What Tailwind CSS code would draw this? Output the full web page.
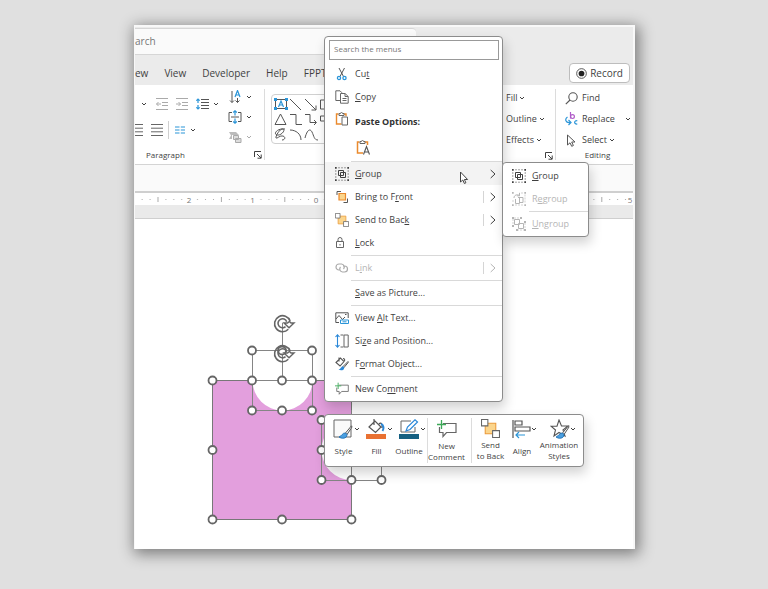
<!DOCTYPE html>
<html lang="en">
<head>
<meta charset="utf-8">
<title>Presentation editor</title>
<script src="https://cdn.jsdelivr.net/npm/@tailwindcss/browser@4"></script>
</head>
<body class="bg-[#e0e0e0] font-['Open_Sans','Noto_Sans',sans-serif] text-[#3f3f3f]">
<svg width="0" height="0" class="absolute" aria-hidden="true">
  <symbol id="caret" viewBox="0 0 6 6"><path d="M1 2 3 4 5 2" fill="none" stroke="currentColor" stroke-width="1"/></symbol>
  <symbol id="chev" viewBox="0 0 6 10"><path d="M.7 1 5 5 .7 9" fill="none" stroke="currentColor" stroke-width="1"/></symbol>
  <symbol id="launch" viewBox="0 0 8 8"><path d="M.5 6V.5H7M3 3l4 4M7.200 3.500v3.700H3.500" fill="none" stroke="currentColor"/></symbol>
  <symbol id="group" viewBox="0 0 14 14"><path d="M3.500 3.500h5v5h-5zM5.500 5.500h5v5h-5z" fill="none" stroke="currentColor"/><path d="M3 .8h8M3 13.200h8M.8 3v8M13.200 3v8" stroke="currentColor" stroke-width=".5" stroke-dasharray="2 1"/><path d="M0 0h1.700v1.700H0zM12.300 0H14v1.700h-1.700zM0 12.300h1.700V14H0zM12.300 12.300H14V14h-1.700z" fill="currentColor"/></symbol>
  <symbol id="regroup" viewBox="0 0 14 14"><path d="M3.500 7v4.500h4V6M6 5.500h5v5H8M2 6C2 3 5 2 7.500 3.500M7.500.8v3H4.800" fill="none" stroke="currentColor"/><path d="M9 1h3M3 13h9M13 2.500v9M1 8v3" stroke="currentColor" stroke-width=".6" stroke-dasharray="2 1"/><path d="M0 0h1.700v1.700H0zM12.300 0H14v1.700h-1.700zM0 12.300h1.700V14H0zM12.300 12.300H14V14h-1.700z" fill="currentColor"/></symbol>
  <symbol id="ungroup" viewBox="0 0 14 14"><path d="M2.500 2.500h5v5h-5zM6.500 6.500h5v5h-5z" fill="none" stroke="currentColor"/><path d="M1 2v6M2 1h6M5 13h7M13 6v6" stroke="currentColor" stroke-width=".6" stroke-dasharray="2 1"/><path d="M0 0h2v2H0zM8 0h2v2H8zM0 8h2v2H0zM4 12h2v2H4zM12 12h2v2h-2zM12 4h2v2h-2z" fill="currentColor"/></symbol>
  <symbol id="sendback" viewBox="0 0 18 18"><path d="M4 4h10v10H4z" fill="#fbd58c" stroke="#ea9a3a"/><path d="M.5.5h6v6h-6zM11 11h6.500v6.500H11z" fill="#fff" stroke="#666"/></symbol>
  <symbol id="comment" viewBox="0 0 20 18"><path d="M6 3.500h13v9h-9.500L6 16.500v-4H2.500V7" fill="none" stroke="#666" stroke-width="1.200"/><path d="M4.500 0v9M0 4.500h9" stroke="#3faa5a" stroke-width="1.300"/></symbol>
  <symbol id="brush" viewBox="0 0 14 14"><path d="M13 .8 7 8l1.500 1.500L13.500 2z" fill="#fff" stroke="#555" stroke-width="1"/><path d="M7 8C4 7.500 3.500 11 .5 12c2.500 2 8 2 8-2.500z" fill="#4a9fe0" stroke="#1769b0" stroke-width=".8"/></symbol>
</svg>

<main class="flex min-h-screen flex-col pt-[25px] pr-[133px] pb-10 pl-[134px]">
<div class="relative flex grow flex-col border-t-2 border-r-2 border-l border-[#f8f8f8] bg-white shadow-[2px_3px_14px_2px_rgba(0,0,0,0.45)]">

  <header class="bg-[#ebebeb]">
    <div class="flex h-7 pt-px">
      <label class="flex h-[27px] w-[281px] items-center rounded-r border-t border-b border-[#d6d6d6] bg-[#fafafa]">
        <input type="text" aria-label="Search" value="arch" class="w-full bg-transparent text-[10px] text-[#777] outline-none">
      </label>
    </div>
    <div class="flex h-[30px] items-center pt-[6px] pr-[3px]">
      <nav class="flex gap-4 text-[10px] leading-4 whitespace-nowrap">
        <a href="#">ew</a><a href="#">View</a><a href="#">Developer</a><a href="#">Help</a><a href="#">FPPT</a>
      </nav>
      <button class="ml-auto flex h-5 items-center gap-[3px] rounded border border-[#bdbdbd] bg-white px-[6px] text-[10px]">
        <svg width="11" height="11" viewBox="0 0 10 10"><circle cx="5" cy="5" r="4.400" fill="none" stroke="#444" stroke-width=".8"/><circle cx="5" cy="5" r="2.600" fill="#222"/></svg>Record
      </button>
    </div>
  </header>

  <section class="flex h-20 border-b border-[#d4d4d4] py-1 text-[9px]">
    <div class="flex w-[130px] flex-col border-r border-[#dcdcdc]">
      <div class="flex h-[62px] justify-between pr-3">
        <div class="flex flex-col gap-3 pt-2">
          <div class="flex h-[14px] items-center">
            <button aria-label="Numbering" class="ml-[6px]"><svg width="6" height="6"><use href="#caret"/></svg></button>
            <button aria-label="Decrease indent" class="ml-[9px]"><svg width="12" height="12" viewBox="0 0 12 12" fill="none" stroke="#aaa"><path d="M0 .5h12M6 4.500h6M6 7.500h6M0 11.500h12M5 6H.5M2.500 4l-2 2 2 2"/></svg></button>
            <button aria-label="Increase indent" class="ml-[8px]"><svg width="12" height="12" viewBox="0 0 12 12" fill="none" stroke="#aaa"><path d="M0 .5h12M6 4.500h6M6 7.500h6M0 11.500h12M0 6h4.500M2.500 4l2 2-2 2"/></svg></button>
            <button aria-label="Line spacing" class="ml-[8px]"><svg width="13" height="12" viewBox="0 0 13 12" fill="none"><path d="M5 1.500h8M5 4.500h8M5 7.500h8M5 10.500h8" stroke="#555"/><path d="M2 1v4M.3 2.700 2 1l1.700 1.700M2 7v4M.3 9.300 2 11l1.700-1.700" stroke="#2b95d8" stroke-width="1.200"/></svg></button>
            <button aria-label="Line spacing options" class="ml-[4px]"><svg width="6" height="6"><use href="#caret"/></svg></button>
          </div>
          <div class="flex h-[14px] items-center">
            <button aria-label="Align right"><svg width="8" height="12" viewBox="0 0 8 12"><path d="M0 .5h8M0 4.200h8M0 7.800h8M0 11.500h8" stroke="#666"/></svg></button>
            <button aria-label="Justify" class="ml-[8px]"><svg width="12" height="12" viewBox="0 0 12 12"><path d="M0 .5h12M0 4.200h12M0 7.800h12M0 11.500h12" stroke="#666"/></svg></button>
            <span class="ml-[5px] h-[18px] w-px bg-[#d0d0d0]"></span>
            <button aria-label="Columns" class="ml-[6px]"><svg width="10" height="8" viewBox="0 0 10 8"><path d="M0 1h4.500M0 4h4.500M0 7h4.500M5.800 1H10M5.800 4H10M5.800 7H10" stroke="#2b95d8" stroke-width="1.200"/></svg></button>
            <button aria-label="Column options" class="ml-[5px]"><svg width="6" height="6"><use href="#caret"/></svg></button>
          </div>
        </div>
        <div class="flex flex-col gap-[6px] pt-px">
          <button aria-label="Text direction" class="flex h-[14px] items-center gap-1"><svg width="14" height="14" viewBox="0 0 14 14" fill="none"><path d="M4 1v11.500M2 10.500l2 2 2-2M9.500 8v4.500M7.500 10.500l2 2 2-2" stroke="#555"/><path d="m7 7 2.500-6.500L12 7M8 5h3" stroke="#2b95d8" stroke-width="1.200"/></svg><svg width="6" height="6"><use href="#caret"/></svg></button>
          <button aria-label="Align text" class="flex h-[14px] items-center gap-1"><svg width="14" height="14" viewBox="0 0 14 14" fill="none"><path d="M4 2.500H1v9h3M10 2.500h3v9h-3M3 7h8" stroke="#555"/><path d="M7 1v4.500M5.200 2.500 7 .8l1.800 1.700M7 8.500V13M5.200 11.500 7 13.200l1.800-1.700" stroke="#2b95d8" stroke-width="1.200"/></svg><svg width="6" height="6"><use href="#caret"/></svg></button>
          <button aria-label="Convert to SmartArt" class="flex h-[14px] items-center gap-1 text-[#aaa]"><svg width="14" height="14" viewBox="0 0 14 14"><path d="M1 2h7l3 3H4v4H1l2-3.500z" fill="#bbb"/><path d="M5.500 5.500h5v4h-5zM7.500 8.500h5.500v4H7.500z" fill="#ddd" stroke="#aaa"/></svg><svg width="6" height="6"><use href="#caret"/></svg></button>
        </div>
      </div>
      <div class="flex h-[10px] items-center pr-[2px] pl-[11px] text-[8px]"><span>Paragraph</span><button aria-label="Paragraph settings" class="ml-auto"><svg width="8" height="8"><use href="#launch"/></svg></button></div>
    </div>

    <div class="ml-[6px] mt-[5px] h-[50px] w-[70px] rounded border border-[#d0d0d0] p-[2px]">
      <svg width="66" height="46" viewBox="0 0 66 46" fill="none" stroke="#555">
        <path d="M1.500 2.500h11v9h-11z"/><path d="M0 1h3v3H0zM11 1h3v3h-3zM0 10h3v3H0zM11 10h3v3h-3z" fill="#2b95d8" stroke="none"/><path d="m4.500 10 2.500-6L9.500 10M5.500 8h3" stroke="#2b95d8" stroke-width="1.200"/>
        <path d="m16 2 11 11M31 2l11 11M42 8.500V13h-4.500M46.500 3h10v9h-10z"/>
        <path d="m6.500 17 5.500 10.500H1zM16 17.500h6v10h6M31 17.500h5v8h6M40 23l2.500 2.500L40 28M46.500 19h8v5h-8z"/>
        <path d="M11 32c-8-1-12 5-8 6s9-5 6-6-8 8-7 9 4-3 7-2 2 4-1 4M16 33c6 0 11 4 11 10M31 41c2-8 5-10 7-6s2 8 6 8M50 38h5"/>
      </svg>
    </div>

    <div class="ml-auto flex w-[50px] flex-col border-r border-[#dcdcdc]">
      <div class="flex h-[64px] flex-col items-start gap-[7px] pt-[2px] leading-[14px]">
        <button class="flex items-center gap-[2px]">Fill<svg width="6" height="6"><use href="#caret"/></svg></button>
        <button class="flex items-center gap-[2px]">Outline<svg width="6" height="6"><use href="#caret"/></svg></button>
        <button class="flex items-center gap-[2px]">Effects<svg width="6" height="6"><use href="#caret"/></svg></button>
      </div>
      <button aria-label="Shape format settings" class="mr-[2px] ml-auto"><svg width="8" height="8"><use href="#launch"/></svg></button>
    </div>

    <div class="flex w-[77px] flex-col pl-[9px]">
      <div class="flex h-[63px] flex-col gap-[7px] pt-[2px] leading-[14px]">
        <button class="flex items-center gap-1"><svg width="13" height="13" viewBox="0 0 13 13" fill="none" stroke="#555" stroke-width="1.100"><circle cx="8" cy="5" r="4.200"/><path d="M5 8 .8 12.200"/></svg>Find</button>
        <button class="flex items-center gap-1 pr-[2px]"><svg width="13" height="14" viewBox="0 0 13 14" fill="none" stroke-width="1.200"><path d="M5.500 0v6.500" stroke="#b05cc8"/><circle cx="7.500" cy="4.600" r="1.900" stroke="#b05cc8"/><path d="M12.300 9c-3-1.500-4 3.500 0 3M2.500 5C-.5 7 .5 11 5 10.500M3.500 8 6 10.500 3.500 13" stroke="#2b95d8"/></svg>Replace<svg class="ml-auto" width="6" height="6"><use href="#caret"/></svg></button>
        <button class="flex items-center gap-[2px]"><svg class="mr-[2px]" width="13" height="13" viewBox="0 0 13 13"><path d="M2.500 1v10l2.500-2.200 1.700 3.500 1.700-.8-1.700-3.500H10z" fill="none" stroke="#555"/></svg>Select<svg width="6" height="6"><use href="#caret"/></svg></button>
      </div>
      <div class="pr-[3px] text-center text-[8px] leading-[10px]">Editing</div>
    </div>
  </section>

  <div class="h-[28px] border-b-2 border-[#cfcfcf] bg-[#fafafa]"></div>
  <svg class="h-[12px] w-full" font-size="8" fill="#777" text-anchor="middle">
    <defs><pattern id="ticks" x="22.500" width="63.400" height="12" patternUnits="userSpaceOnUse"><path d="M.5 4v5" stroke="#aaa"/><path d="M8.400 6v1M16.300 6v1M24.200 6v1M40 6v1M48 6v1M56 6v1" stroke="#aaa"/></pattern></defs>
    <rect width="100%" height="12" fill="url(#ticks)"/>
    <text x="54" y="10">2</text><text x="117.500" y="10">1</text><text x="181" y="10">0</text><text x="495" y="10">5</text>
  </svg>
  <div class="h-[14px] border-b border-[#cfcfcf] bg-[#eaeaea]"></div>

  <div class="relative grow overflow-hidden">
    <svg class="absolute inset-0 h-full w-full" fill="none" stroke="#777">
      <defs>
        <circle id="h" r="4" fill="#fff" stroke="#666" stroke-width="1.800"/>
        <g id="rot"><path d="M5.800 5.800A8 8 0 1 1 7.600-2.500M3 3.200A4.500 4.500 0 1 1 4.200-1.800" stroke="#666" stroke-width="1.600"/><path d="M1.500-.5h3.500l2-1.500 1.500 1.500H11.500L6.500 4.200z" fill="#fff" stroke="#666" stroke-width="1.400"/></g>
      </defs>
      <g transform="translate(-135,-219)">
        <path d="M212.500 380.500h139v139h-139z" fill="#e39fdd"/>
        <path d="M252.500 380.500h60a30 30 0 0 1-60 0zM351.500 420a30 30 0 0 0 0 60z" fill="#fff" stroke="none"/>
        <path d="M252.500 350.500h60v60h-60zM321.500 420.500h60v60h-60zM351.500 410v80M252 380.500h60M282.500 323v57" stroke="#858585"/>
        <use href="#h" x="212.500" y="380.500"/><use href="#h" x="212.500" y="450"/><use href="#h" x="212.500" y="519.500"/><use href="#h" x="282" y="519.500"/><use href="#h" x="351.500" y="519.500"/>
        <use href="#h" x="252" y="350.500"/><use href="#h" x="282" y="350.500"/><use href="#h" x="312" y="350.500"/><use href="#h" x="252" y="380.500"/><use href="#h" x="282" y="380.500"/><use href="#h" x="312" y="380.500"/><use href="#h" x="252" y="410.500"/><use href="#h" x="282" y="410.500"/><use href="#h" x="312" y="410.500"/>
        <use href="#h" x="321.500" y="420"/><use href="#h" x="321.500" y="450"/><use href="#h" x="321.500" y="480"/><use href="#h" x="351.500" y="480"/><use href="#h" x="381.500" y="480"/>
        <use href="#rot" x="282.500" y="323.500"/><use href="#rot" x="282.500" y="353.500"/>
      </g>
    </svg>
  </div>

  <div role="menu" class="absolute top-[9px] left-[189px] w-[179px] rounded border border-[#8c8c8c] bg-white pt-[3px] pb-px text-[9px] shadow-[2px_6px_12px_rgba(0,0,0,0.18)]">
    <input type="text" aria-label="Search the menus" placeholder="Search the menus" class="mx-1 mb-[2px] block h-5 w-[170px] border border-[#999] px-1 pb-[3px] text-[8px] outline-none placeholder:text-[#777]">
    <button role="menuitem" class="flex h-[23px] w-full items-center gap-[6px] pl-[10px]"><svg width="14" height="14" viewBox="0 0 14 14" fill="none"><path d="m4 1 4.500 8.500M9.500 1 5 9.500" stroke="#555"/><circle cx="4" cy="11" r="1.600" stroke="#2b95d8" stroke-width="1.300"/><circle cx="9.500" cy="11" r="1.600" stroke="#2b95d8" stroke-width="1.300"/></svg><span>Cu<u>t</u></span></button>
    <button role="menuitem" class="flex h-[23px] w-full items-center gap-[6px] pl-[10px]"><svg width="14" height="14" viewBox="0 0 14 14" fill="none" stroke="#666"><path d="M5 10.500H.8V.8H5l2 2M5.500 3.500h4.700l3 3v6.700H5.500zM10 3.500v3h3M7.500 8.500h4M7.500 10.500h4"/></svg><span><u>C</u>opy</span></button>
    <div class="flex h-[27px] items-center gap-[6px] pl-[10px] font-bold text-[#333]"><svg class="mb-[6px]" width="14" height="14" viewBox="0 0 14 14" fill="none"><path d="M3.500 2H1.500v10h5M8.500 2H11v2" stroke="#ea8a2e" stroke-width="1.400"/><path d="M4 3.500v-2h1.500C5.500 0 7.500 0 7.500 1.500H9v2zM7 5h5.500v8H7z" fill="#fff" stroke="#666"/></svg>Paste Options:</div>
    <button role="menuitem" aria-label="Keep text only" class="flex h-[25px] w-full items-center pl-[31px]"><svg width="15" height="15" viewBox="0 0 15 15" fill="none"><path d="M3.500 2H1.500v11H7M9 2h2.500v3" stroke="#ea8a2e" stroke-width="1.500"/><path d="M4 3.500v-2h1.500C5.500 0 7.500 0 7.500 1.500H9v2z" fill="#fff" stroke="#666"/><path d="m7.500 14.500 3-8 3 8M8.500 12h4" stroke="#555" stroke-width="1.100"/></svg></button>
    <hr class="mt-px ml-[26px] border-[#d9d9d9]">
    <button role="menuitem" class="flex h-[23px] w-full items-center gap-[6px] bg-[#f3f3f3] pr-[6px] pl-[10px]"><svg width="14" height="14"><use href="#group"/></svg><span><u>G</u>roup</span><svg class="ml-auto" width="6" height="10"><use href="#chev"/></svg></button>
    <button role="menuitem" class="flex h-[23px] w-full items-center gap-[6px] pr-[6px] pl-[10px]"><svg width="14" height="14" viewBox="0 0 14 14"><path d="M4 3.500h6.500v6.500H4z" fill="#fbd58c" stroke="#ea8a2e" stroke-width="1.200"/><path d="M2 5V1.500h4M8.500 12.500h4V8.500" fill="none" stroke="#555"/></svg><span>Bring to F<u>r</u>ont</span><span class="ml-auto h-3 w-px bg-[#d5d5d5]"></span><svg width="6" height="10"><use href="#chev"/></svg></button>
    <button role="menuitem" class="flex h-[23px] w-full items-center gap-[6px] pr-[6px] pl-[10px]"><svg width="14" height="14"><use href="#sendback"/></svg><span>Send to Bac<u>k</u></span><span class="ml-auto h-3 w-px bg-[#d5d5d5]"></span><svg width="6" height="10"><use href="#chev"/></svg></button>
    <button role="menuitem" class="flex h-[23px] w-full items-center gap-[6px] pl-[10px]"><svg width="14" height="14" viewBox="0 0 14 14" fill="none" stroke="#666"><path d="M1.500 5.500h7v6h-7zM3 5.500V3.500a2 2 0 0 1 4 0v2M5 8v1.500"/></svg><span><u>L</u>ock</span></button>
    <hr class="mt-px ml-[26px] border-[#d9d9d9]">
    <button role="menuitem" disabled class="flex h-[23px] w-full items-center gap-[6px] pr-[6px] pl-[10px] text-[#b5b5b5]"><svg width="14" height="14" viewBox="0 0 14 14" fill="none" stroke="#aaa" stroke-width="1.200"><path d="M5.500 9H4a3 3 0 0 1 0-6h2.500a3 3 0 0 1 2 5M8 5h1.500a2.800 2.800 0 0 1 0 6H7.500a3 3 0 0 1-2-5"/></svg><span>L<u>i</u>nk</span><span class="ml-auto h-3 w-px bg-[#d5d5d5]"></span><svg width="6" height="10"><use href="#chev"/></svg></button>
    <hr class="mt-px ml-[26px] border-[#d9d9d9]">
    <button role="menuitem" class="flex h-[23px] w-full items-center pl-[30px]"><span><u>S</u>ave as Picture...</span></button>
    <hr class="mt-px ml-[26px] border-[#d9d9d9]">
    <button role="menuitem" class="flex h-[23px] w-full items-center gap-[6px] pl-[10px]"><svg width="14" height="14" viewBox="0 0 14 14" fill="none"><path d="M4 11.500H.8V1.800h12.400V7M1 8l3-3.500 3.500 4L10 6" stroke="#555"/><path d="M10 3.500h1.500" stroke="#555"/><path d="M5.500 9h8v3.500h-8zM7.500 10.800h4" fill="#fff" stroke="#2b95d8"/></svg><span>View <u>A</u>lt Text...</span></button>
    <button role="menuitem" class="flex h-[23px] w-full items-center gap-[6px] pl-[10px]"><svg width="14" height="14" viewBox="0 0 14 14" fill="none"><path d="M2.500 1v12M.5 3l2-2.200L4.500 3M.5 11l2 2.200 2-2.200" stroke="#2b88d8" stroke-width="1.100"/><path d="M9 1h4.200v12H9zM8.500 1H5.500M8.500 13H5.500" stroke="#666"/></svg><span>Si<u>z</u>e and Position...</span></button>
    <button role="menuitem" class="flex h-[23px] w-full items-center gap-[6px] pl-[10px]"><svg width="14" height="14" viewBox="0 0 14 14" fill="none"><path d="M1 5.500 5.500 1 9 4.500 5 9zM4 .5v4M8 1.500c1.500 0 2 1 1.500 2.500" stroke="#555" stroke-width="1.100"/><path d="m13 4.500-5 5 1 1 4.200-5z" fill="#fff" stroke="#555"/><path d="M8 9.200c-2 0-2 3-4.500 3.300 2 1.500 6 1 5.700-2z" fill="#2b88d8"/></svg><span>F<u>o</u>rmat Object...</span></button>
    <hr class="mt-px ml-[26px] border-[#d9d9d9]">
    <button role="menuitem" class="flex h-[23px] w-full items-center gap-[6px] pl-[10px]"><svg width="14" height="14"><use href="#comment"/></svg><span>New Co<u>m</u>ment</span></button>
  </div>

  <div role="menu" class="absolute top-[135px] left-[367px] w-[87px] rounded border border-[#8c8c8c] bg-white py-px text-[9px] shadow-[2px_6px_12px_rgba(0,0,0,0.18)]">
    <button role="menuitem" class="flex h-[23px] w-full items-center gap-[6px] pl-[9px]"><svg width="14" height="14"><use href="#group"/></svg><span><u>G</u>roup</span></button>
    <button role="menuitem" disabled class="flex h-[23px] w-full items-center gap-[6px] pl-[9px] text-[#b5b5b5]"><svg width="14" height="14"><use href="#regroup"/></svg><span>R<u>e</u>group</span></button>
    <hr class="mt-px ml-[26px] border-[#d9d9d9]">
    <button role="menuitem" disabled class="flex h-[23px] w-full items-center gap-[6px] pl-[9px] text-[#b5b5b5]"><svg width="14" height="14"><use href="#ungroup"/></svg><span><u>U</u>ngroup</span></button>
  </div>

  <div role="toolbar" aria-label="Object tools" class="absolute top-[387px] left-[189px] flex h-[53px] w-[260px] rounded border border-[#8c8c8c] bg-white py-[3px] text-[8px] leading-[11px] shadow-[2px_6px_12px_rgba(0,0,0,0.18)]">
    <button class="flex w-[37px] flex-col items-center gap-[6px] pt-px"><span class="ml-[6px] flex items-center"><svg width="21" height="20" viewBox="0 0 21 20"><path d="M1 1h17v17H1z" fill="#fafafa" stroke="#666"/><use href="#brush" x="5" y="6" width="15" height="14"/></svg><svg width="6" height="6"><use href="#caret"/></svg></span>Style</button>
    <button class="flex w-[29px] flex-col items-center gap-[6px] pt-px"><span class="ml-[6px] flex items-center"><svg width="21" height="20" viewBox="0 0 21 20"><path d="m3 8 6-6 6 6-5.500 5.500zM8 0v6M13 5c2-2 4 0 3 4" fill="none" stroke="#555" stroke-width="1.200"/><path d="M15 5c3 1 3 5 1.500 7" fill="none" stroke="#2b88d8" stroke-width="2"/><path d="M0 15h20v5H0z" fill="#e97132"/></svg><svg width="6" height="6"><use href="#caret"/></svg></span>Fill</button>
    <button class="flex w-9 flex-col items-center gap-[6px] pt-px"><span class="ml-[6px] flex items-center"><svg width="21" height="20" viewBox="0 0 21 20"><path d="M12 2H2v11h14V8" fill="none" stroke="#666"/><path d="m7 12 1.500-4L16 .8 18.500 3 11 10.500z" fill="#fff" stroke="#2b88d8" stroke-width="1.200"/><path d="M0 15h20v5H0z" fill="#156082"/></svg><svg width="6" height="6"><use href="#caret"/></svg></span>Outline</button>
    <button class="flex w-[44px] flex-col items-center gap-[2px] border-l border-[#dcdcdc] pt-[2px] pr-[6px]"><svg class="shrink-0" width="20" height="18"><use href="#comment"/></svg><span>New<br>Comment</span></button>
    <button class="flex w-[38px] flex-col items-center gap-px border-l border-[#dcdcdc] pt-px"><svg class="shrink-0" width="19" height="19"><use href="#sendback"/></svg><span class="whitespace-nowrap">Send<br>to Back</span></button>
    <button class="flex w-[26px] flex-col items-center gap-[6px] pt-px"><span class="ml-1 flex items-center"><svg width="19" height="20" viewBox="0 0 19 20" fill="none"><path d="M1 1v18M3 2h7v4H3zM3 8h15v4H3z" stroke="#555" stroke-width="1.200"/><path d="M13 16H4M7 13l-3 3 3 3" stroke="#2b95d8" stroke-width="1.200"/></svg><svg width="6" height="6"><use href="#caret"/></svg></span>Align</button>
    <button class="flex grow flex-col items-center gap-px pt-px"><span class="ml-2 flex h-[19px] items-center"><svg width="20" height="20" viewBox="0 0 20 20"><path d="m9 1 2.500 6H18l-5 4 2 6-6-3.500L4 17l1.500-6L1 7.200h6z" fill="#fff" stroke="#555" stroke-width="1.100"/><use href="#brush" x="5" y="6" width="15" height="14"/></svg><svg width="6" height="6"><use href="#caret"/></svg></span><span>Animation<br>Styles</span></button>
  </div>

  <svg class="pointer-events-none absolute top-[144px] left-[324px]" width="10" height="14" viewBox="0 0 10 14" aria-hidden="true"><path d="M1.500 1v10l2.300-2 1.600 3.500 1.500-.7-1.500-3.300h3.200z" fill="#fff" stroke="#444"/></svg>
</div>
</main>
</body>
</html>
